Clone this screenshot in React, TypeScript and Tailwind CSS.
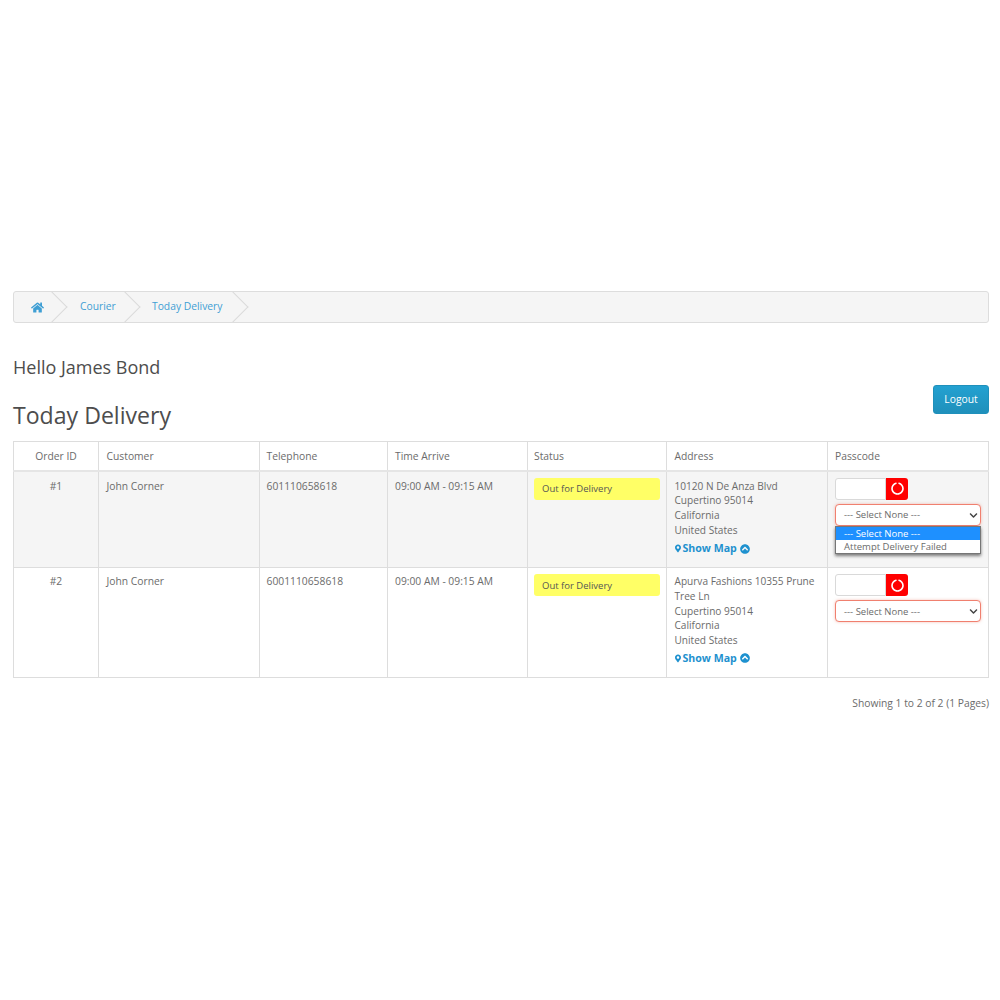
import { FaChevronCircleUp, FaChevronDown, FaCircleNotch, FaHome, FaMapMarkerAlt } from 'react-icons/fa';
import { ReactNode } from 'react';

const orders = [
  {
    id: '#1',
    customer: 'John Corner',
    telephone: '601110658618',
    address: ['10120 N De Anza Blvd', 'Cupertino 95014', 'California', 'United States'],
    open: true,
  },
  {
    id: '#2',
    customer: 'John Corner',
    telephone: '6001110658618',
    address: ['Apurva Fashions 10355 Prune Tree Ln', 'Cupertino 95014', 'California', 'United States'],
    open: false,
  },
];

function Crumb({ children, className }: { children: ReactNode; className: string }) {
  return (
    <li className={`relative flex h-full items-center text-[#3f9fd4] ${className}`}>
      {children}
      <span className="absolute right-[-6px] top-[4px] h-[22px] w-[22px] rotate-45 border-r border-t border-[#dbdbdb]" />
    </li>
  );
}

function PasscodeCell({ open }: { open: boolean }) {
  return (
    <div className="relative text-[9.5px]">
      <div className="flex h-[22px] w-[73px]">
        <div className="w-[51px] rounded-l-[3px] border border-[#d9d9d9] bg-white" />
        <div className="flex w-[22px] items-center justify-center rounded-r-[3px] bg-[#ff0000]">
          <FaCircleNotch className="h-[13px] w-[13px] text-white" />
        </div>
      </div>
      <div className="mt-[4px] flex h-[22px] w-[146px] items-center justify-between rounded-[4px] border border-[#f0806f] bg-white pl-[8px] pr-[2px] pt-[1px] shadow-[0_0_3px_rgba(240,128,111,0.5)]">
        <span>--- Select None ---</span>
        <FaChevronDown className="h-[9px] w-[9px] text-[#444444]" />
      </div>
      {open && (
        <div className="absolute left-0 top-[48px] w-[146px] border border-[#767676] bg-white leading-[13px] shadow-[0_2px_3px_rgba(0,0,0,0.5)]">
          <div className="bg-[#1e90ff] pl-[8px] text-white">--- Select None ---</div>
          <div className="pl-[8px]">Attempt Delivery Failed</div>
        </div>
      )}
    </div>
  );
}

export default function App() {
  return (
    <div className="min-h-[1000px] bg-white pl-[13px] pr-[11px] pt-[291px] font-['Open_Sans','Noto_Sans',sans-serif] text-[10.3px] text-[#6b6b6b]">
      <ul className="flex h-[32px] overflow-hidden rounded-[3px] border border-[#dddddd] bg-[#f5f5f5]">
        <Crumb className="w-[43px] justify-center pl-[3px]">
          <FaHome className="h-[13px] w-[13px]" />
        </Crumb>
        <Crumb className="w-[73px] pl-[23px]">Courier</Crumb>
        <Crumb className="w-[108px] pl-[22px]">Today Delivery</Crumb>
      </ul>

      <div className="mt-[32px] flex items-end justify-between">
        <div>
          <h3 className="text-[18px] leading-[24px] text-[#4d4d4d]">Hello James Bond</h3>
          <h1 className="mt-[21px] pb-[1px] text-[23.1px] leading-[30px] text-[#4d4d4d]">Today Delivery</h1>
        </div>
        <button className="mb-[17px] h-[29px] w-[56px] rounded-[3px] border border-[#1f90bb] bg-gradient-to-b from-[#23a1d1] to-[#1f90bb] text-white">
          Logout
        </button>
      </div>

      <table className="mt-[10px] w-[976px] table-fixed border-collapse">
        <thead>
          <tr className="h-[29px] border-b-2 border-[#e5e5e5]">
            <th className="w-[85px] border border-[#dddddd] pt-[2px] text-center font-normal">Order ID</th>
            <th className="w-[160.5px] border border-[#dddddd] pl-[7.5px] pt-[2px] text-left font-normal">Customer</th>
            <th className="w-[128.5px] border border-[#dddddd] pl-[7px] pt-[2px] text-left font-normal">Telephone</th>
            <th className="w-[139.5px] border border-[#dddddd] pl-[7px] pt-[2px] text-left font-normal">Time Arrive</th>
            <th className="w-[139.5px] border border-[#dddddd] pl-[6.5px] pt-[2px] text-left font-normal">Status</th>
            <th className="w-[161px] border border-[#dddddd] pl-[7.5px] pt-[2px] text-left font-normal">Address</th>
            <th className="border border-[#dddddd] pl-[7px] pt-[2px] text-left font-normal">Passcode</th>
          </tr>
        </thead>
        <tbody>
          {orders.map((order) => {
            const textTop = order.open ? 'pt-[7px]' : 'pt-[6px]';
            return (
              <tr key={order.id} className={order.open ? 'bg-[#f5f5f5]' : 'bg-white'}>
                <td className={`border border-[#dddddd] pb-[7px] text-center align-top leading-[15px] ${textTop}`}>{order.id}</td>
                <td className={`border border-[#dddddd] px-[7.5px] pb-[7px] align-top leading-[15px] ${textTop}`}>{order.customer}</td>
                <td className={`border border-[#dddddd] px-[7px] pb-[7px] align-top leading-[15px] ${textTop}`}>{order.telephone}</td>
                <td className={`border border-[#dddddd] px-[7px] pb-[7px] align-top leading-[15px] ${textTop}`}>09:00 AM - 09:15 AM</td>
                <td className="border border-[#dddddd] px-[6.5px] pt-[6px] align-top leading-[15px]">
                  <div className="flex h-[22px] items-center rounded-[3px] bg-[#ffff66] pl-[8px] text-[9.5px] text-[#555555]">Out for Delivery</div>
                </td>
                <td className={`border border-[#dddddd] px-[7.5px] pb-[11px] align-top text-[10.1px] leading-[14.7px] ${textTop}`}>
                  {order.address.map((line) => (
                    <div key={line}>{line}</div>
                  ))}
                  <div className={`flex h-[15px] items-center gap-[2px] text-[10.6px] font-bold text-[#1e91cf] ${order.open ? 'mt-[4px]' : 'mt-[3px]'}`}>
                    <FaMapMarkerAlt className="h-[9px] w-[6px]" />
                    Show Map
                    <FaChevronCircleUp className="ml-[1px] h-[10px] w-[10px]" />
                  </div>
                </td>
                <td className="border border-[#dddddd] px-[7px] pt-[6px] align-top">
                  <PasscodeCell open={order.open} />
                </td>
              </tr>
            );
          })}
        </tbody>
      </table>

      <p className="mt-[18px] text-right leading-[15px]">Showing 1 to 2 of 2 (1 Pages)</p>
    </div>
  );
}
